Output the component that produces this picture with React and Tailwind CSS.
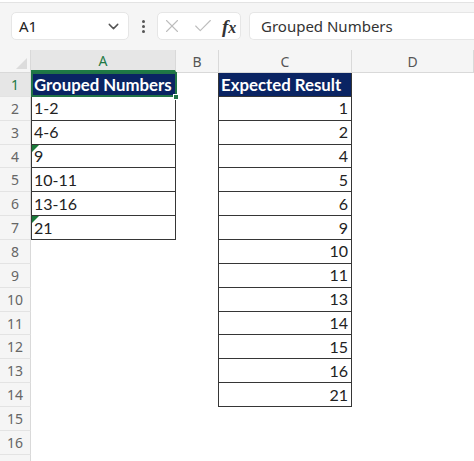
import { ChevronDown, X, Check } from "lucide-react";

const ROW_H = "h-[23.86px]";

const groups = ["1-2", "4-6", "9", "10-11", "13-16", "21"];
const results = [1, 2, 4, 5, 6, 9, 10, 11, 13, 14, 15, 16, 21];
const textFlags = { 3: true, 6: true };

function Toolbar() {
  return (
    <div className="h-[50px] bg-[#f5f5f5] relative">
      <div className="h-[3px] bg-white border-b border-[#e3e3e3]" />
      <div className="flex items-center pt-[9px]">
        <div className="ml-[11px] w-[118px] h-[28px] bg-white rounded-[5px] border border-[#e6e6e6] flex items-center justify-between pl-[7px] pr-[6px]">
          <span className="text-[15px] text-[#222]" style={{ fontFamily: "'Noto Sans', sans-serif" }}>A1</span>
          <ChevronDown size={17} strokeWidth={2} className="text-[#555]" />
        </div>
        <div className="w-[28px] flex flex-col items-center gap-[2px]">
          <span className="w-[3px] h-[3px] rounded-full bg-[#555]" />
          <span className="w-[3px] h-[3px] rounded-full bg-[#555]" />
          <span className="w-[3px] h-[3px] rounded-full bg-[#555]" />
        </div>
        <div className="w-[84px] h-[28px] bg-white rounded-[5px] border border-[#e6e6e6] flex items-center pl-[3px]">
          <X size={22} strokeWidth={1.2} className="text-[#bdbdbd]" />
          <Check size={22} strokeWidth={1.2} className="text-[#bdbdbd] ml-[9px]" />
          <span className="ml-[8px] text-[19px] italic font-bold text-[#333] leading-none" style={{ fontFamily: "'Liberation Serif', serif" }}>
            f<span className="text-[16px]">x</span>
          </span>
        </div>
        <div className="ml-[8px] flex-1 h-[28px] bg-white rounded-l-[5px] border border-r-0 border-[#e6e6e6] flex items-center pl-[11px]">
          <span className="text-[15px] text-[#333]" style={{ fontFamily: "'Noto Sans', sans-serif" }}>Grouped Numbers</span>
        </div>
      </div>
    </div>
  );
}

function HeaderRow() {
  const cols = [
    { l: "A", w: "w-[145px]", sel: true },
    { l: "B", w: "w-[43px]" },
    { l: "C", w: "w-[133px]" },
    { l: "D", w: "flex-1" },
  ];
  return (
    <div className="flex h-[23px] bg-[#f5f5f5] border-b border-[#d9d9d9]" style={{ fontFamily: "'Noto Sans', sans-serif" }}>
      <div className="w-[31px] relative border-r border-[#d9d9d9]">
        <div className="absolute right-[3px] bottom-[3px] w-0 h-0 border-l-[11px] border-l-transparent border-b-[11px] border-b-[#dcdcdc]" />
      </div>
      {cols.map((c) => (
        <div
          key={c.l}
          className={`${c.w} flex items-center justify-center text-[14px] border-r border-[#d9d9d9] ${
            c.sel ? "bg-[#e6e6e6] text-[#1e7a45] border-b-2 border-b-[#1e7a45]" : "text-[#555]"
          }`}
        >
          {c.l}
        </div>
      ))}
    </div>
  );
}

function Row({ n }) {
  const i = n - 1;
  const inA = n <= 7;
  const inC = n <= 14;
  const cellFont = { fontFamily: "Lato, 'Liberation Sans', sans-serif" };
  return (
    <div className={`flex ${ROW_H}`}>
      <div
        className={`w-[31px] shrink-0 flex items-center justify-center text-[14px] border-b border-[#e3e3e3] border-r border-r-[#d9d9d9] ${
          n === 1 ? "bg-[#e6e6e6] text-[#1e7a45]" : "bg-[#f5f5f5] text-[#666]"
        }`}
        style={{ fontFamily: "'Noto Sans', sans-serif" }}
      >
        {n <= 16 ? n : ""}
      </div>
      <div
        className={`w-[145px] shrink-0 relative flex items-center ${
          inA ? "border-b-[1.5px] border-r-[1.5px] border-l-[1.5px] border-[#363636]" : ""
        } ${n === 1 ? "bg-[#0a2463] text-white font-bold text-[16.8px]" : "text-[#222] text-[16px]"}`}
        style={cellFont}
      >
        {n === 1 && (
          <>
            <div className="absolute -inset-[1.5px] border-2 border-[#217346]" />
            <div className="absolute -right-[4px] -bottom-[4px] w-[6px] h-[6px] bg-[#217346] border border-white z-10" />
          </>
        )}
        {textFlags[i] && (
          <div className="absolute left-0 top-0 w-0 h-0 border-t-[7px] border-t-[#1a7a3a] border-r-[7px] border-r-transparent" />
        )}
        <span className="pl-[2px] relative whitespace-nowrap">{n === 1 ? "Grouped Numbers" : inA ? groups[i - 1] : ""}</span>
      </div>
      <div className="w-[42px] shrink-0" />
      <div
        className={`w-[134px] shrink-0 flex items-center whitespace-nowrap ${
          inC ? "border-b-[1.5px] border-r-[1.5px] border-l-[1.5px] border-[#363636]" : ""
        } ${n === 1 ? "bg-[#0a2463] text-white font-bold text-[16.8px] justify-start pl-[2px]" : "justify-end pr-[3px] text-[#222] text-[16px]"}`}
        style={cellFont}
      >
        {n === 1 ? "Expected Result" : inC ? results[i - 1] : ""}
      </div>
      <div className="flex-1" />
    </div>
  );
}

export default function App() {
  const rows = Array.from({ length: 17 }, (_, k) => k + 1);
  return (
    <div className="w-[474px] h-[461px] overflow-hidden bg-white">
      <Toolbar />
      <HeaderRow />
      {rows.map((n) => (
        <Row key={n} n={n} />
      ))}
    </div>
  );
}
